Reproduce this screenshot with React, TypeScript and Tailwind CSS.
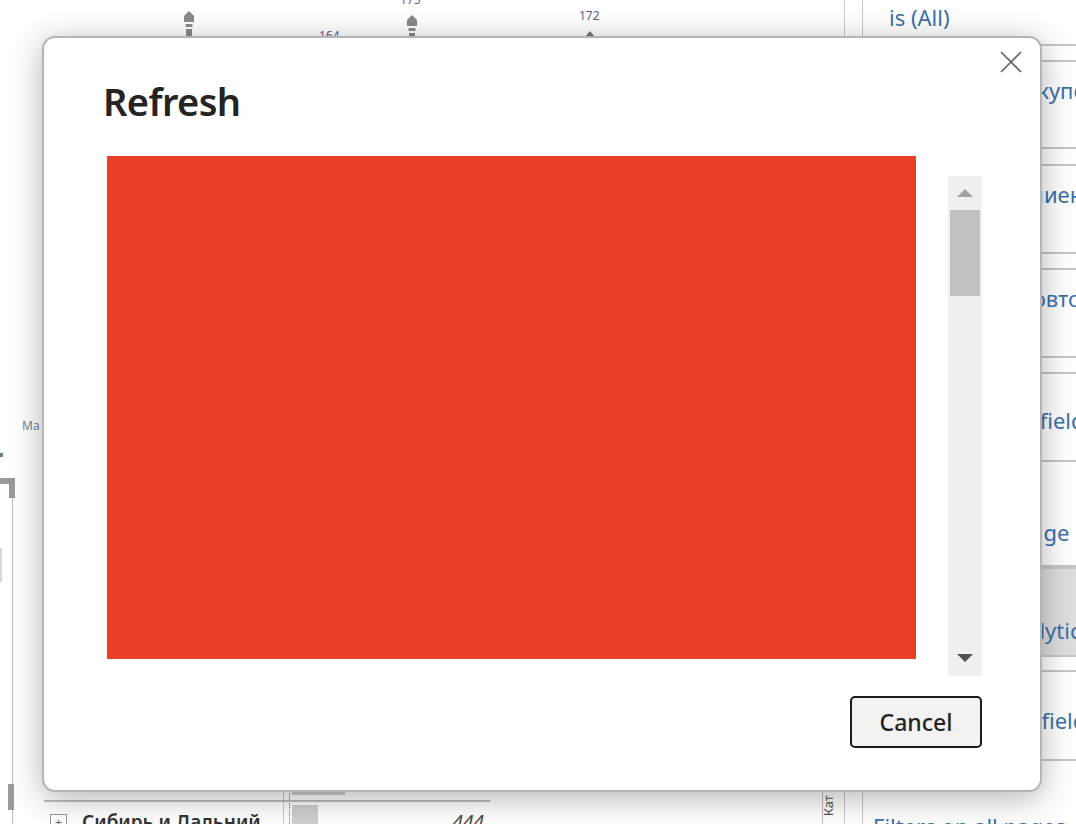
import React from "react";

const PANE_CARDS: { h: number; mt: number; text: string; pl: number; pt: number; grey?: boolean; bt?: boolean }[] = [
  { h: 89, mt: 14, text: "Использование купона", pl: 2, pt: 13, bt: true },
  { h: 90, mt: 15, text: "Количество клиентов", pl: 26, pt: 13, bt: true },
  { h: 90, mt: 14, text: "Количество повторов", pl: 26, pt: 13, bt: true },
  { h: 90, mt: 14, text: "Add data fields here", pl: 78, pt: 31, bt: true },
  { h: 105, mt: 0, text: "Filters on this page", pl: 10, pt: 55 },
  { h: 90, mt: 0, text: "Drillthrough analytics", pl: 6, pt: 46, grey: true, bt: true },
  { h: 91, mt: 13, text: "Add drillthrough fields here", pl: 2, pt: 33, bt: true },
];

function Marker() {
  return (
    <svg width="12" height="26" viewBox="0 0 12 26" fill="#8a8a8a">
      <path d="M6 0 L11 5 L11 11 L1 11 L1 5 Z" />
      <rect x="2.5" y="13" width="7" height="3" />
      <rect x="3" y="18" width="6" height="8" />
    </svg>
  );
}

export default function App() {
  return (
    <div className="relative w-[1076px] h-[824px] overflow-hidden bg-white font-['Noto_Sans','Open_Sans',sans-serif]">
      {/* report canvas (behind the dialog) */}
      <div className="absolute left-0 top-0 w-[845px] h-full border-r border-[#c8c8c8]">
        <div className="absolute left-[183px] top-[11px]"><Marker /></div>
        <div className="absolute left-[406px] top-[15px]"><Marker /></div>
        <span className="absolute left-[400px] top-[-9px] text-[12px] text-[#5f5b8c]">175</span>
        <span className="absolute left-[319px] top-[27px] text-[12px] text-[#5f5b8c]">164</span>
        <span className="absolute left-[579px] top-[7px] text-[12px] text-[#5f5b8c]">172</span>
        <div className="absolute left-[585px] top-[31px] w-0 h-0 border-x-[5px] border-x-transparent border-b-[6px] border-b-[#777]" />
        <span className="absolute left-[22px] top-[417px] text-[12px] text-[#7b8794]">Ma</span>
        <div className="absolute left-0 top-[453px] w-[3px] h-[4px] bg-[#6b7c8f]" />
        <div className="absolute left-0 top-[478px] w-[15px] h-[20px] border-t-[6px] border-r-[6px] border-[#9a9a9a]" />
        <div className="absolute left-[12px] top-[498px] w-px h-[330px] bg-[#bdbdbd]" />
        <div className="absolute left-0 top-[548px] w-[2px] h-[34px] bg-[#d8d8d8]" />
        <div className="absolute left-[8px] top-[784px] w-[6px] h-[26px] bg-[#9a9a9a]" />

        {/* table fragment at the bottom */}
        <div className="absolute left-[283px] top-[700px] w-px h-[130px] bg-[#c8c8c8]" />
        <div className="absolute left-[289px] top-[700px] h-[130px] border-l border-dotted border-[#4f7fb3]" />
        <div className="absolute left-[292px] top-[784px] w-[53px] h-[11px] bg-[#cfcfcf]" />
        <div className="absolute left-[292px] top-[805px] w-[26px] h-[20px] bg-[#cfcfcf]" />
        <div className="absolute left-[44px] top-[800px] w-[446px] h-[2px] bg-[#bdbdbd]" />
        <div className="absolute left-[44px] top-[808px] w-[450px] flex items-center gap-[15px] pl-[6px] whitespace-nowrap">
          <div className="w-[17px] h-[17px] border border-[#9a9a9a] flex items-center justify-center text-[13px] leading-none text-[#666]">+</div>
          <span className="text-[19px] font-semibold text-[#333]">Сибирь и Дальний</span>
          <span className="ml-auto pr-[10px] text-[19px] italic text-[#444]">444</span>
        </div>

        <div className="absolute left-[822px] top-[780px] w-px h-[50px] bg-[#bdbdbd]" />
        <span className="absolute left-[818px] top-[796px] text-[13px] text-[#555] -rotate-90 origin-center">Кат</span>
      </div>

      {/* filters pane */}
      <div className="absolute left-[862px] top-0 right-0 h-full border-l border-[#c8c8c8] flex flex-col">
        <div className="h-[46px] shrink-0 border-b-2 border-[#c6c6c6] pl-[26px] pt-[2px] text-[22px] leading-[30px] text-[#3b72a9]">
          is (All)
        </div>
        {PANE_CARDS.map((c, i) => (
          <div
            key={i}
            className={`shrink-0 border-b-2 border-[#c6c6c6] text-[22px] leading-[30px] text-[#3b72a9] whitespace-nowrap ${c.bt ? "border-t-2" : ""} ${c.grey ? "bg-[#dedede]" : "bg-white"}`}
            style={{ height: c.h, marginTop: c.mt, paddingLeft: c.pl, paddingTop: c.pt }}
          >
            {c.text}
          </div>
        ))}
        <div className="pl-[10px] mt-[50px] text-[22px] leading-[30px] text-[#3b72a9] whitespace-nowrap">Filters on all pages</div>
      </div>

      {/* Refresh dialog */}
      <div className="absolute left-[42px] top-[36px] w-[1000px] h-[756px] rounded-[13px] border-2 border-[#b4b4b4] bg-white shadow-[0_6px_32px_rgba(0,0,0,0.3)] flex flex-col">
        <button className="absolute left-[954px] top-[11px] w-[26px] h-[26px] flex items-center justify-center" title="Close">
          <svg width="22" height="22" viewBox="0 0 22 22" stroke="#666" strokeWidth="1.7" fill="none">
            <path d="M1 1 L21 21 M21 1 L1 21" />
          </svg>
        </button>

        <h1 className="ml-[59px] mt-[39px] h-[48px] text-[38px] leading-[48px] font-semibold text-[#252423] tracking-[-0.6px]">
          Refresh
        </h1>

        <div className="flex ml-[63px] mt-[31px]">
          <div className="w-[809px] h-[503px] bg-[#e94027]" />
          <div className="ml-[32px] mt-[20px] w-[34px] h-[500px] bg-[#f0f0f0] flex flex-col items-center">
            <div className="h-[34px] flex items-center justify-center">
              <div className="w-0 h-0 border-x-[8px] border-x-transparent border-b-[8px] border-b-[#a3a3a3]" />
            </div>
            <div className="w-[30px] h-[86px] bg-[#c1c1c1]" />
            <div className="flex-1" />
            <div className="h-[36px] flex items-center justify-center">
              <div className="w-0 h-0 border-x-[8px] border-x-transparent border-t-[8px] border-t-[#505050]" />
            </div>
          </div>
        </div>

        <div className="flex justify-end mr-[58px] mt-[20px]">
          <button className="w-[132px] h-[52px] rounded-[5px] border-2 border-[#1b1a19] bg-[#f3f2f1] text-[23px] font-medium text-[#252423]">
            Cancel
          </button>
        </div>
      </div>
    </div>
  );
}
